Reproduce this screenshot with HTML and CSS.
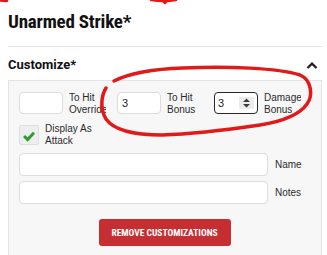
FILE: index.html
```html
<!DOCTYPE html>
<html lang="en">
<head>
    <meta charset="UTF-8">
    <meta name="viewport" content="width=device-width, initial-scale=1.0">
    <title>Unarmed Strike</title>
    <link rel="stylesheet" href="styles.css">
</head>
<body>
<div class="page">
    <h1 class="title">Unarmed Strike*</h1>

    <div class="section-head">
        <span>Customize*</span>
        <svg class="chevron" width="12" height="7" viewBox="0 0 12 7">
            <path d="M1.5 6 L6 1.6 L10.5 6" fill="none" stroke="#1e1e1e" stroke-width="2.2"/>
        </svg>
    </div>

    <div class="panel">
        <div class="bonus-row">
            <div class="field">
                <input type="text" class="small-box">
                <label class="field-label">To Hit Override</label>
            </div>
            <div class="field">
                <input type="text" class="small-box" value="3">
                <label class="field-label">To Hit Bonus</label>
            </div>
            <div class="field">
                <div class="num-box">
                    <input type="text" value="3">
                    <span class="spinner">
                        <svg width="9" height="10" viewBox="0 0 9 10">
                            <path d="M4.5 0.5 L8 4 L1 4 Z M1 6 L8 6 L4.5 9.5 Z" fill="#3c3c3c"/>
                        </svg>
                    </span>
                </div>
                <label class="field-label">Damage Bonus</label>
            </div>
        </div>

        <div class="check-row">
            <span class="checkbox">
                <svg width="20" height="20" viewBox="0 0 20 20">
                    <path d="M4.5 10 L8.5 14 L15.5 6.5" fill="none" stroke="#2f9a31" stroke-width="3.2"/>
                </svg>
            </span>
            <span class="check-label">Display As Attack</span>
        </div>

        <div class="text-row">
            <input type="text" class="wide-box">
            <label class="row-label">Name</label>
        </div>
        <div class="text-row">
            <input type="text" class="wide-box">
            <label class="row-label">Notes</label>
        </div>

        <div class="actions">
            <button class="remove-btn">REMOVE CUSTOMIZATIONS</button>
        </div>
    </div>
</div>

<!-- red marker scribble drawn over the screenshot -->
<svg class="scribble" width="327" height="255" viewBox="0 0 327 255">
    <g fill="none" stroke="#e01a1a" stroke-linecap="round" stroke-linejoin="round">
        <path d="M0 0.5 L7 1" stroke-width="2.5"/>
        <path d="M151 0 C158 1, 170 1, 176 0 M163 1 L165 3 L167 1" stroke-width="2.5"/>
        <path d="M114 81 C128 74, 152 69, 183 68 C228 66, 278 68, 300 75 C312 80, 313 96, 307 104 C300 114, 285 121, 260 125 C226 130, 196 134, 162 135 C132 135, 113 129, 106 119 C100 109, 101 96, 106 88" stroke-width="3.5"/>
    </g>
</svg>
</body>
</html>
```

FILE: styles.css
```css
body {
    margin: 0;
    padding: 0;
    background: #fff;
    font-family: "Liberation Sans", Arial, sans-serif;
    color: #2b2b2b;
    position: relative;
    overflow: hidden;
}

.page {
    padding: 0 5px 0 8px;
}

.title {
    margin: 10px 0 0;
    padding-bottom: 12px;
    border-bottom: 1px solid #e2e2e2;
    font-family: "Liberation Sans Narrow", "Roboto Condensed", Roboto, sans-serif;
    font-stretch: condensed;
    font-size: 19px;
    line-height: 24px;
    font-weight: 700;
    letter-spacing: -0.2px;
    color: #111;
}

.section-head {
    margin-top: 10px;
    height: 16px;
    display: flex;
    align-items: center;
    justify-content: space-between;
    padding-right: 4px;
    font-family: Roboto, sans-serif;
    font-size: 13px;
    line-height: 16px;
    font-weight: 700;
    color: #111;
}

.chevron {
    margin-top: 1px;
}

.panel {
    margin-top: 7px;
    background: #f7f7f7;
    border: 1px solid #e4e4e4;
    padding: 11px 11px 20px 10px;
}

.bonus-row {
    display: grid;
    grid-template-columns: 98px 97px 1fr;
}

.field {
    display: flex;
    gap: 6px;
    align-items: flex-start;
}

.small-box,
.wide-box {
    box-sizing: border-box;
    height: 22px;
    border: 1px solid #dcdcdc;
    border-radius: 4px;
    background: #fff;
    padding: 0 4px;
    font-family: "Liberation Sans", Arial, sans-serif;
    font-size: 11px;
    color: #222;
    outline: none;
}

.small-box {
    width: 44px;
}

.num-box {
    box-sizing: border-box;
    width: 44px;
    height: 22px;
    display: flex;
    align-items: center;
    border: 1px solid #262626;
    border-radius: 4px;
    background: #fff;
    padding: 0 3px;
}

.num-box input {
    flex: 1;
    min-width: 0;
    border: none;
    padding: 0;
    background: transparent;
    font-family: "Liberation Sans", Arial, sans-serif;
    font-size: 11px;
    color: #222;
    outline: none;
}

.spinner {
    width: 15px;
    height: 12px;
    background: #ececec;
    display: flex;
    align-items: center;
    justify-content: center;
}

.field-label,
.check-label,
.row-label {
    font-size: 10px;
    line-height: 12px;
    color: #2b2b2b;
}

.field-label {
    width: 37px;
    overflow: hidden;
}

.check-row {
    margin-top: 7px;
    display: flex;
    gap: 6px;
    align-items: flex-start;
}

.checkbox {
    box-sizing: border-box;
    width: 20px;
    height: 20px;
    margin-top: 2px;
    background: #eeeeee;
    border: 1px solid #dedede;
    border-radius: 2px;
    display: flex;
}

.check-label {
    width: 60px;
}

.text-row {
    margin-top: 5px;
    display: flex;
    align-items: center;
    gap: 7px;
}

.check-row + .text-row {
    margin-top: 6px;
}

.wide-box {
    flex: 1;
    height: 23px;
}

.row-label {
    width: 35px;
}

.actions {
    margin-top: 15px;
    display: flex;
    justify-content: center;
}

.remove-btn {
    width: 132px;
    height: 27px;
    border: none;
    border-radius: 3px;
    background: #c62f32;
    color: #fff;
    font-family: "Liberation Sans Narrow", "Roboto Condensed", Roboto, sans-serif;
    font-stretch: condensed;
    font-size: 9.5px;
    font-weight: 700;
    padding: 0;
}

.scribble {
    position: absolute;
    top: 0;
    left: 0;
    pointer-events: none;
}
```
